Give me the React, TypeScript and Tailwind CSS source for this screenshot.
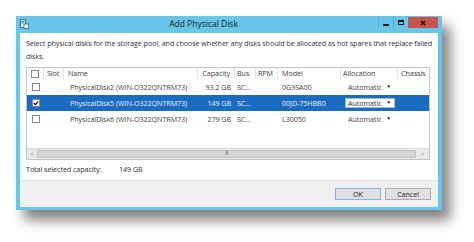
import type React from "react"

const cols = "grid grid-cols-[17px_20px_134px_37px_21px_22px_63px_57px_1fr]"

const disks = [
  { name: "PhysicalDisk2 (WIN-O322QNTRM73)", capacity: "93.2 GB", bus: "SC...", model: "0G9SA00", selected: false },
  { name: "PhysicalDisk5 (WIN-O322QNTRM73)", capacity: "149 GB", bus: "SC...", model: "00JD-75HBB0", selected: true },
  { name: "PhysicalDisk6 (WIN-O322QNTRM73)", capacity: "279 GB", bus: "SC...", model: "L30050", selected: false },
]

function Checkbox({ checked }: { checked?: boolean }) {
  return (
    <div className="w-[8px] h-[8px] border border-[#8a8a8a] bg-white flex items-center justify-center">
      {checked && (
        <svg width="7" height="6" viewBox="0 0 7 6">
          <path d="M1 3 L2.8 4.8 L6 1" stroke="#111" strokeWidth="1.4" fill="none" />
        </svg>
      )}
    </div>
  )
}

function HeaderCell({ children, className = "" }: { children?: React.ReactNode; className?: string }) {
  return (
    <div className={`h-full flex items-center border-r border-[#e3e3e3] whitespace-nowrap overflow-hidden ${className}`}>
      {children}
    </div>
  )
}

function AppIcon() {
  return (
    <svg width="9" height="10" viewBox="0 0 9 10">
      <rect x="0.5" y="0.5" width="5" height="8" fill="#eef6fb" stroke="#3d6f9a" />
      <rect x="4" y="5" width="4.5" height="4.5" fill="#f4f4f4" stroke="#5a7d9e" />
      <path d="M1.5 2.5 H4.5 M1.5 4 H3.5" stroke="#3d6f9a" />
    </svg>
  )
}

export default function App() {
  return (
    <div className="w-[474px] h-[242px] bg-white pt-4 pl-4 font-['Open_Sans',sans-serif] text-[7.2px] tracking-[-0.08px] text-[#3c3c3c]">
      <div className="w-[426px] h-[194px] bg-[#66c7e9] flex flex-col shadow-[8px_10px_12px_rgba(0,0,0,0.5)]">
        {/* title bar */}
        <div className="h-[17px] flex items-start pl-[4px] pr-[4px] relative">
          <div className="mt-[3px]">
            <AppIcon />
          </div>
          <div className="flex-1 h-full flex items-center justify-center text-[8.5px] tracking-normal text-[#1a1a1a]">
            Add Physical Disk
          </div>
          <div className="flex mt-[1px] h-[11px]">
            <div className="w-[15px] h-full flex items-end justify-center pb-[2px] border-l border-[#4fa9c9]">
              <div className="w-[6px] h-[2px] bg-[#111]" />
            </div>
            <div className="w-[15px] h-full flex items-center justify-center border-l border-[#4fa9c9]">
              <div className="w-[6px] h-[5px] border border-t-2 border-[#111]" />
            </div>
            <div className="w-[30px] h-full bg-[#c9534d] flex items-center justify-center">
              <svg width="6" height="6" viewBox="0 0 6 6">
                <path d="M1 1 L5 5 M5 1 L1 5" stroke="#2a1010" strokeWidth="1.5" />
              </svg>
            </div>
          </div>
        </div>

        {/* client area */}
        <div className="flex-1 mx-[4px] mb-[3px] bg-white flex flex-col">
          <div className="flex-1 pl-[6px] pr-[8px] pt-[4px] flex flex-col">
            <div className="leading-[13px] whitespace-nowrap text-[#333]">
              <div>Select physical disks for the storage pool, and choose whether any disks should be allocated as hot spares that replace failed</div>
              <div>disks.</div>
            </div>

            {/* list view */}
            <div className="mt-[4px] h-[93px] border border-[#c6c6c6] flex flex-col">
              <div className={`${cols} h-[11px] text-[#404040]`}>
                <HeaderCell className="pl-[4px]">
                  <Checkbox />
                </HeaderCell>
                <HeaderCell className="pl-[3px]">Slot</HeaderCell>
                <HeaderCell className="pl-[4px]">Name</HeaderCell>
                <HeaderCell className="justify-end pr-[4px]">Capacity</HeaderCell>
                <HeaderCell className="pl-[2px]">Bus</HeaderCell>
                <HeaderCell className="pl-[2px]">RPM</HeaderCell>
                <HeaderCell className="pl-[4px]">Model</HeaderCell>
                <HeaderCell className="pl-[2px]">Allocation</HeaderCell>
                <HeaderCell className="pl-[3px] border-r-0">Chassis</HeaderCell>
              </div>

              {disks.map((d) => (
                <div
                  key={d.name}
                  className={`${cols} h-[16px] items-center ${d.selected ? "bg-[#1b6cc1] text-[#e9f2fc]" : "text-[#454545]"}`}
                >
                  <div className="pl-[5px]">
                    <Checkbox checked={d.selected} />
                  </div>
                  <div />
                  <div className="pl-[6px] whitespace-nowrap">{d.name}</div>
                  <div className="text-right pr-[4px] whitespace-nowrap">{d.capacity}</div>
                  <div className="pl-[2px]">{d.bus}</div>
                  <div />
                  <div className="pl-[4px] whitespace-nowrap">{d.model}</div>
                  <div className="pl-[4px]">
                    <div
                      className={`w-[50px] h-[10px] flex items-center justify-between pl-[2px] pr-[3px] border ${
                        d.selected ? "bg-white border-[#9fb9d6] text-[#333]" : "border-transparent"
                      }`}
                    >
                      <span>Automatic</span>
                      <span className="text-[5px] text-[#222]">▼</span>
                    </div>
                  </div>
                  <div />
                </div>
              ))}

              <div className="flex-1" />

              {/* horizontal scrollbar */}
              <div className="h-[11px] flex bg-[#e8e8e8] border-t border-[#dcdcdc]">
                <div className="w-[10px] flex items-center justify-center text-[6px] text-[#666]">&lt;</div>
                <div className="flex-1 my-[1px] bg-[#d6d6d6] border border-[#c2c2c2] flex items-center justify-center">
                  <span className="text-[5px] tracking-[-0.5px] text-[#555]">III</span>
                </div>
                <div className="w-[13px] flex items-center justify-center text-[6px] text-[#666]">&gt;</div>
              </div>
            </div>

            <div className="mt-[3px] leading-[12px] flex text-[#333]">
              <span className="w-[93px]">Total selected capacity:</span>
              <span>149 GB</span>
            </div>
          </div>

          {/* footer */}
          <div className="h-[27px] bg-[#f0f0f0] border-t border-[#e2e2e2] flex items-center justify-end gap-[4px] pr-[7px]">
            <button className="w-[46px] h-[12px] bg-[#e1e1e1] border border-[#7fb4e4] flex items-center justify-center text-[#222]">
              OK
            </button>
            <button className="w-[46px] h-[12px] bg-[#e1e1e1] border border-[#adadad] flex items-center justify-center text-[#222]">
              Cancel
            </button>
          </div>
        </div>
      </div>
    </div>
  )
}
